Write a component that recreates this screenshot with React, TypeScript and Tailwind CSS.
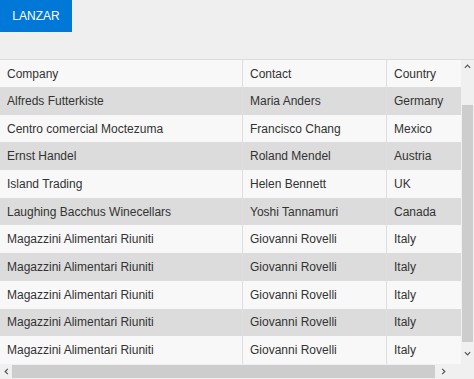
import React from 'react';

const rows: [string, string, string][] = [
  ['Alfreds Futterkiste', 'Maria Anders', 'Germany'],
  ['Centro comercial Moctezuma', 'Francisco Chang', 'Mexico'],
  ['Ernst Handel', 'Roland Mendel', 'Austria'],
  ['Island Trading', 'Helen Bennett', 'UK'],
  ['Laughing Bacchus Winecellars', 'Yoshi Tannamuri', 'Canada'],
  ['Magazzini Alimentari Riuniti', 'Giovanni Rovelli', 'Italy'],
  ['Magazzini Alimentari Riuniti', 'Giovanni Rovelli', 'Italy'],
  ['Magazzini Alimentari Riuniti', 'Giovanni Rovelli', 'Italy'],
  ['Magazzini Alimentari Riuniti', 'Giovanni Rovelli', 'Italy'],
  ['Magazzini Alimentari Riuniti', 'Giovanni Rovelli', 'Italy'],
];

const Chevron = ({ d }: { d: string }) => (
  <svg className="w-[7px] h-[7px]" viewBox="0 0 8 8" fill="none" stroke="#555" strokeWidth="1.4">
    <path d={d} />
  </svg>
);

const Row = ({ cells, odd }: { cells: [string, string, string]; odd: boolean }) => (
  <div className={`grid grid-cols-[243px_144px_120px] h-[27.7px] ${odd ? 'bg-[#dcdcdc]' : 'bg-[#f8f8f8]'}`}>
    {cells.map((c, i) => (
      <div key={i} className={`flex items-center pl-[7px] whitespace-nowrap ${i < 2 ? 'border-r border-[#dedede]' : ''}`}>
        {c}
      </div>
    ))}
  </div>
);

export default function App() {
  return (
    <div className="w-[474px] h-[379px] overflow-hidden bg-[#efefef] text-[12px] text-[#333] font-['Liberation_Sans',Arial,sans-serif]">
      <button className="h-8 w-[72px] bg-[#0078d7] text-white text-[12px]">LANZAR</button>

      <div className="mt-[27px] border-t border-[#dcdcdc] flex h-[305px]">
        <div className="w-[461px] overflow-hidden">
          <div className="grid grid-cols-[243px_144px_120px] h-[27px] bg-[#f8f8f8]">
            {['Company', 'Contact', 'Country'].map((h, i) => (
              <div key={h} className={`flex items-center pl-[7px] ${i < 2 ? 'border-r border-[#dedede]' : ''}`}>
                {h}
              </div>
            ))}
          </div>
          {rows.map((r, i) => (
            <Row key={i} cells={r} odd={i % 2 === 0} />
          ))}
        </div>

        {/* vertical scrollbar */}
        <div className="w-[13px] flex flex-col bg-[#f0f0f0]">
          <div className="h-[13px] flex items-center justify-center">
            <Chevron d="M1 5.5 L4 2.5 L7 5.5" />
          </div>
          <div className="h-[32px]" />
          <div className="flex-1 bg-[#cdcdcd] mx-[1px]" />
          <div className="h-[22px] flex items-center justify-center">
            <Chevron d="M1 2.5 L4 5.5 L7 2.5" />
          </div>
        </div>
      </div>

      {/* horizontal scrollbar */}
      <div className="flex h-[15px] bg-[#f0f0f0]">
        <div className="w-[12px] flex items-center justify-center">
          <Chevron d="M5.5 1 L2.5 4 L5.5 7" />
        </div>
        <div className="w-[423px] bg-[#cdcdcd] my-[1px]" />
        <div className="w-[16px] flex items-center justify-center">
          <Chevron d="M2.5 1 L5.5 4 L2.5 7" />
        </div>
      </div>
    </div>
  );
}
